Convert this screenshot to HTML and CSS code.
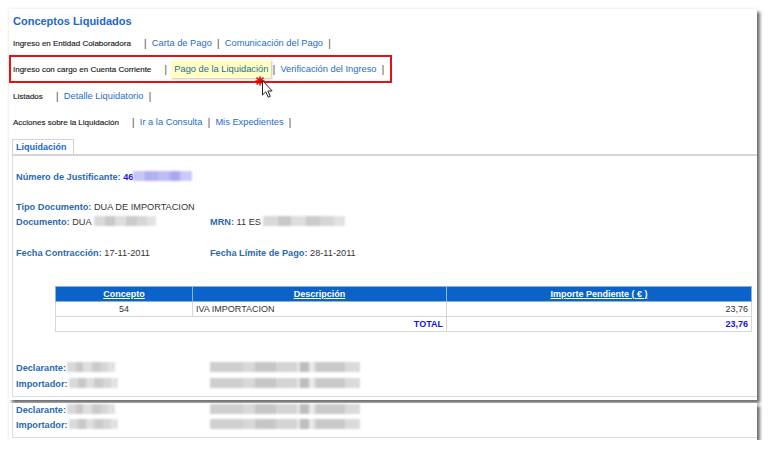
FILE: index.html
```html
<!DOCTYPE html>
<html lang="es">
<head>
    <meta charset="UTF-8">
    <title>Conceptos Liquidados</title>
    <link rel="stylesheet" href="styles.css">
</head>
<body>
    <div class="shot">
        <h1 class="title">Conceptos Liquidados</h1>

        <div class="nav-row">
            <span class="nav-label">Ingreso en Entidad Colaboradora</span>
            <span class="sep">|</span><a href="#">Carta de Pago</a><span class="sep">|</span><a href="#">Comunicación del Pago</a><span class="sep">|</span>
        </div>

        <div class="nav-row marked">
            <span class="nav-label">Ingreso con cargo en Cuenta Corriente</span>
            <span class="sep">|</span><a href="#" class="hover">Pago de la Liquidación</a><span class="sep">|</span><a href="#">Verificación del Ingreso</a><span class="sep">|</span>
            <svg class="pointer" width="20" height="24" viewBox="0 0 20 24">
                <g stroke="#e00000" stroke-width="1.6" stroke-linecap="round">
                    <line x1="1" y1="5" x2="9" y2="5"/>
                    <line x1="5" y1="1" x2="5" y2="9"/>
                    <line x1="2" y1="2" x2="8" y2="8"/>
                    <line x1="8" y1="2" x2="2" y2="8"/>
                </g>
                <path d="M7.5 4.5 L7.5 19 L10.8 15.8 L13.2 21.2 L15.3 20.3 L12.9 15 L17.2 15 Z" fill="#fff" stroke="#222" stroke-width="1" stroke-linejoin="round"/>
            </svg>
        </div>

        <div class="nav-row row-listados">
            <span class="nav-label">Listados</span>
            <span class="sep">|</span><a href="#">Detalle Liquidatorio</a><span class="sep">|</span>
        </div>

        <div class="nav-row row-acciones">
            <span class="nav-label">Acciones sobre la Liquidación</span>
            <span class="sep">|</span><a href="#">Ir a la Consulta</a><span class="sep">|</span><a href="#">Mis Expedientes</a><span class="sep">|</span>
        </div>

        <div class="tab">Liquidación</div>

        <div class="panel">
            <div class="field justificante">
                <span class="lbl">Número de Justificante:</span> <span class="num">46</span><span class="blur blur-blue w59"></span>
            </div>

            <div class="field tipo">
                <span class="lbl">Tipo Documento:</span> DUA DE IMPORTACION
            </div>
            <div class="pair documento">
                <div class="field"><span class="lbl">Documento:</span> DUA <span class="blur w62"></span></div>
                <div class="field"><span class="lbl">MRN:</span> 11 ES <span class="blur w82"></span></div>
            </div>

            <div class="pair fechas">
                <div class="field"><span class="lbl">Fecha Contracción:</span> 17-11-2011</div>
                <div class="field"><span class="lbl">Fecha Límite de Pago:</span> 28-11-2011</div>
            </div>

            <table class="conceptos">
                <tr>
                    <th class="c1"><a href="#">Concepto</a></th>
                    <th class="c2"><a href="#">Descripción</a></th>
                    <th class="c3"><a href="#">Importe Pendiente ( € )</a></th>
                </tr>
                <tr>
                    <td class="center">54</td>
                    <td>IVA IMPORTACION</td>
                    <td class="right">23,76</td>
                </tr>
                <tr class="total">
                    <td colspan="2" class="right">TOTAL</td>
                    <td class="right">23,76</td>
                </tr>
            </table>

            <div class="pair declarante">
                <div class="field"><span class="lbl">Declarante:</span><span class="blur w48"></span></div>
                <div class="field"><span class="blur long"></span></div>
            </div>
            <div class="pair">
                <div class="field"><span class="lbl">Importador:</span><span class="blur w49"></span></div>
                <div class="field"><span class="blur long"></span></div>
            </div>
        </div>
    </div>

    <div class="shot shot-tail">
        <div class="panel">
            <div class="pair">
                <div class="field"><span class="lbl">Declarante:</span><span class="blur w48"></span></div>
                <div class="field"><span class="blur long"></span></div>
            </div>
            <div class="pair">
                <div class="field"><span class="lbl">Importador:</span><span class="blur w49"></span></div>
                <div class="field"><span class="blur long"></span></div>
            </div>
        </div>
    </div>
</body>
</html>
```

FILE: styles.css
```css
:root {
    --title: #1a67cc;
    --link: #1f6cc6;
    --label: #2c6aae;
    --value: #1515e6;
    --head: #0b63c9;
    --line: #d6d6d6;
}

body {
    margin: 0;
    padding: 9px 0 0 9px;
    background: #fff;
    font-family: 'Liberation Sans', Arial, sans-serif;
    color: #333;
}

.shot {
    width: 748px;
    padding-bottom: 3px;
    background: #fff;
    box-shadow: 3px 3px 3px rgba(0, 0, 0, 0.55), 0 0 3px rgba(0, 0, 0, 0.12);
}

.shot-tail {
    margin-top: 3px;
    height: 34px;
    padding-bottom: 3px;
    overflow: hidden;
}

.title {
    margin: 0;
    padding: 4px 0 0 4px;
    font-size: 11px;
    line-height: 16px;
    color: var(--title);
}

.nav-row {
    display: flex;
    align-items: center;
    height: 16px;
    margin-top: 6px;
    padding-left: 4px;
    font-size: 9.3px;
    white-space: nowrap;
}

.nav-row > * {
    flex-shrink: 0;
}

.nav-row a {
    color: var(--link);
    text-decoration: none;
}

.nav-label {
    font-size: 8px;
    color: #222;
    margin-right: 8px;
    -webkit-text-stroke: 0.15px #222;
}

.sep {
    margin: 0 5px;
    color: #666;
    font-size: 11.5px;
}

.marked {
    position: relative;
    width: 377px;
    height: 24px;
    margin-top: 4px;
    padding-left: 2px;
    border: 2px solid #e81010;
}

.nav-row a.hover {
    padding: 4px 3px;
    margin-left: -1px;
    margin-right: -4px;
    background: #ffffc6;
    color: #1e6f8f;
    box-shadow: 1px 1px 2px rgba(0, 0, 0, 0.25);
}

.pointer {
    position: absolute;
    left: 244px;
    top: 19px;
}

.row-listados {
    margin-top: 5px;
}

.row-acciones {
    margin-top: 10px;
}

.tab {
    width: 57px;
    height: 14px;
    margin: 9px 0 0 3px;
    border: 1px solid #d4d4d4;
    border-bottom: none;
    padding-left: 3px;
    font-size: 9px;
    line-height: 15px;
    font-weight: bold;
    color: var(--title);
}

.panel {
    margin-left: 3px;
    padding: 0 0 5px 3px;
    border-top: 2px solid #d4d4d4;
    border-left: 1px solid #dcdcdc;
    border-bottom: 1px solid #dcdcdc;
    font-size: 9.2px;
}

.field {
    line-height: 14px;
    white-space: nowrap;
}

.lbl {
    font-weight: bold;
    color: var(--label);
}

.num {
    font-weight: bold;
    color: var(--value);
}

.justificante {
    margin-top: 14px;
}

.tipo {
    margin-top: 16px;
}

.pair {
    display: grid;
    grid-template-columns: 194px 1fr;
    margin-top: 2px;
}

.documento {
    margin-top: 1px;
}

.fechas {
    margin-top: 17px;
}

.blur {
    display: inline-block;
    height: 10px;
    vertical-align: -1px;
    background: linear-gradient(90deg, #d9d9d9 0 18%, #c8c8c8 18% 34%, #dedede 34% 52%, #cbcbcb 52% 70%, #d6d6d6 70% 86%, #e2e2e2 86%);
    filter: blur(0.8px);
}

.blur-blue {
    background: linear-gradient(90deg, #c6c6f6 0 20%, #b0b0f2 20% 42%, #bdbdf5 42% 62%, #a9a9ef 62% 80%, #c9c9f7 80%);
}

.w48 { width: 48px; margin-left: 1px; }
.w49 { width: 49px; margin-left: 1px; }
.w59 { width: 59px; }
.w62 { width: 62px; }
.w82 { width: 82px; }

.long {
    width: 150px;
    background: linear-gradient(90deg, #cfcfcf 0 22%, #d8d8d8 22% 30%, #c6c6c6 30% 44%, #d4d4d4 44% 58%, #e6e6e6 58% 60%, #bdbdbd 60% 66%, #e8e8e8 66% 70%, #c9c9c9 70% 90%, #dadada 90%);
}

.conceptos {
    margin: 26px 0 0 39px;
    width: 697px;
    border-collapse: collapse;
    border: 1px solid var(--line);
    font-size: 9px;
    color: #333;
}

.conceptos th,
.conceptos td {
    height: 14px;
    padding: 0 3px;
    border: 1px solid var(--line);
    line-height: 14px;
}

.conceptos th {
    background: var(--head);
    border-color: #8fb1da;
}

.conceptos th a {
    color: #fff;
    font-weight: bold;
}

.c1 { width: 130px; }
.c2 { width: 247px; }

.center { text-align: center; }
.right { text-align: right; }

.total td {
    font-weight: bold;
    color: var(--value);
}

.declarante {
    margin-top: 29px;
}

.shot-tail .panel {
    margin-top: -2px;
    padding-bottom: 5px;
    border-top: none;
}

.shot-tail .pair + .pair {
    margin-top: 1px;
}
```
